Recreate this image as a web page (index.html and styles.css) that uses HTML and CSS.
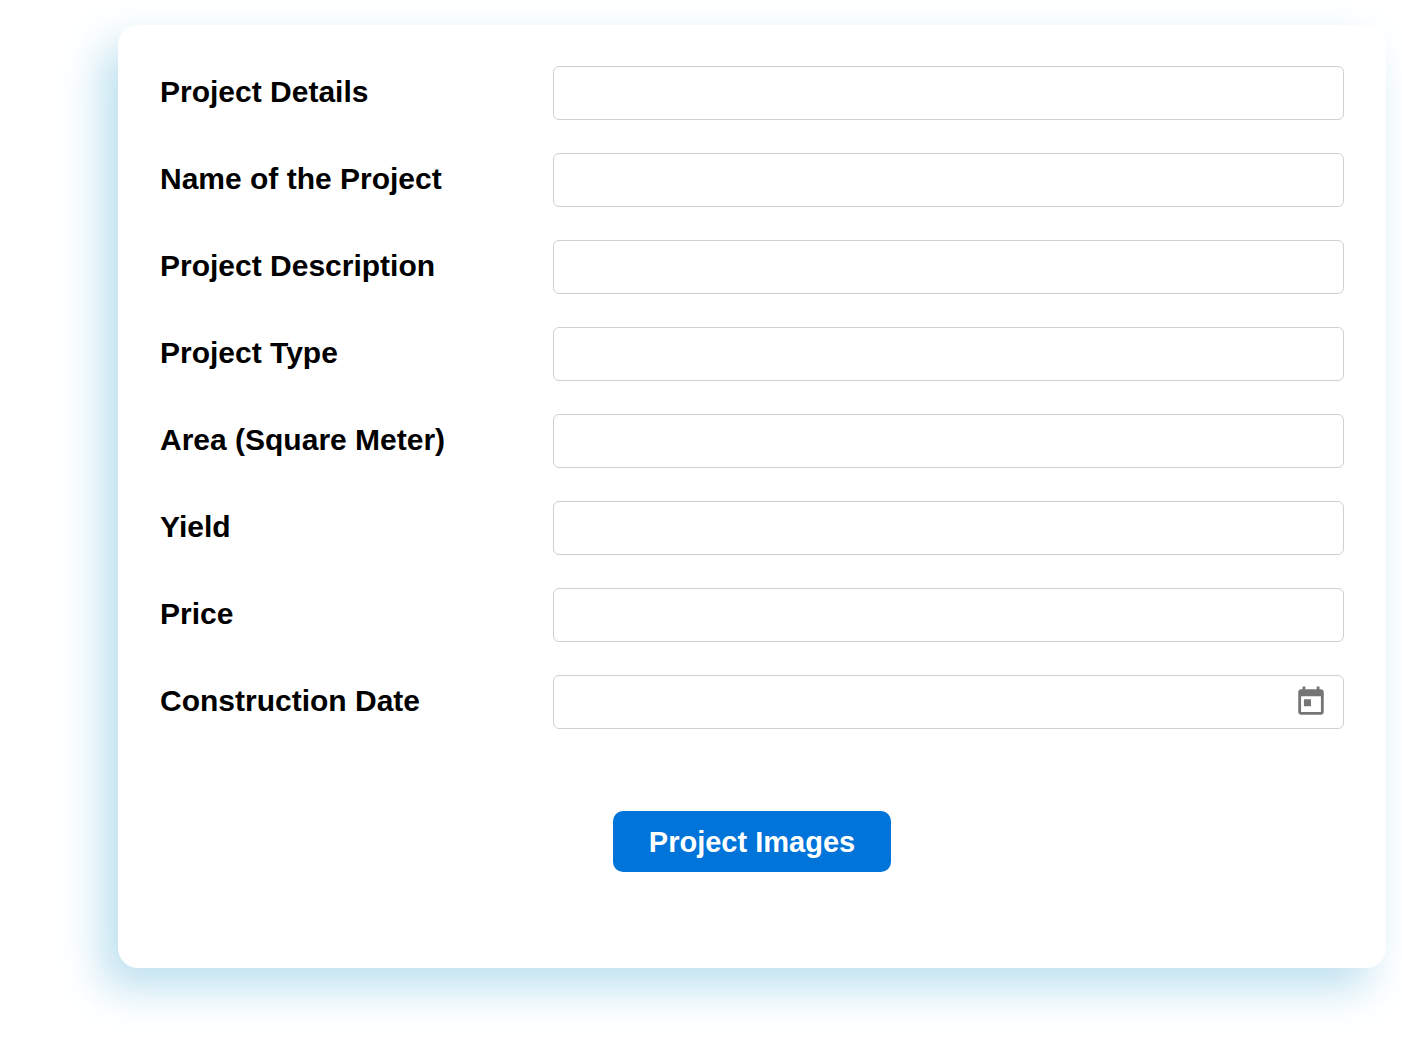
FILE: index.html
```html
<!DOCTYPE html>
<html lang="en">
<head>
<meta charset="utf-8">
<meta name="viewport" content="width=device-width, initial-scale=1">
<title>Project Details</title>
<link rel="stylesheet" href="styles.css">
</head>
<body>
<form class="card">
  <div class="row"><label for="details">Project Details</label><input class="field" id="details" type="text"></div>
  <div class="row"><label for="name">Name of the Project</label><input class="field" id="name" type="text"></div>
  <div class="row"><label for="description">Project Description</label><input class="field" id="description" type="text"></div>
  <div class="row"><label for="type">Project Type</label><input class="field" id="type" type="text"></div>
  <div class="row"><label for="area">Area (Square Meter)</label><input class="field" id="area" type="text"></div>
  <div class="row"><label for="yield">Yield</label><input class="field" id="yield" type="text"></div>
  <div class="row"><label for="price">Price</label><input class="field" id="price" type="text"></div>
  <div class="row"><label for="date">Construction Date</label>
    <div class="field date">
      <input class="date-input" id="date" type="text">
      <button class="date-button" type="button" aria-label="Choose date">
        <svg class="icon" viewBox="0 0 24 24" aria-hidden="true"><path d="M19 3h-1V1h-2v2H8V1H6v2H5c-1.110 0-1.990.9-1.990 2L3 19c0 1.100.89 2 2 2h14c1.100 0 2-.9 2-2V5c0-1.100-.9-2-2-2zm0 16H5V8h14v11zM7 10h5v5H7z"/></svg>
      </button>
    </div>
  </div>
  <button class="submit" type="button">Project Images</button>
</form>
</body>
</html>
```
FILE: styles.css
```css
* {
  box-sizing: border-box;
}

body {
  margin: 0;
  padding: 25px 16px 92px 118px;
  background: #fff;
  color: #000;
  font-family: "Liberation Sans", Arial, sans-serif;
  overflow-x: hidden;
}

.card {
  display: flex;
  flex-direction: column;
  gap: 33px;
  padding: 41px 42px 96px;
  border-radius: 20px;
  background: #fff;
  box-shadow: -16px 20px 44px #bce0ef;
}

.row {
  display: grid;
  grid-template-columns: 393px 1fr;
  align-items: center;
}

label {
  padding-bottom: 2px;
  font-size: 30px;
  font-weight: 700;
  line-height: 34px;
}

.field {
  width: 100%;
  height: 54px;
  padding: 0 15px;
  border: 1px solid #d0d0d0;
  border-radius: 6px;
  background: #fff;
  font: inherit;
  font-size: 28px;
}

.date {
  display: flex;
  align-items: center;
}

.date-input {
  flex: 1;
  min-width: 0;
  border: 0;
  outline: 0;
  font: inherit;
}

.date-button {
  display: flex;
  padding: 0;
  border: 0;
  background: none;
}

.icon {
  width: 34px;
  height: 34px;
  fill: #757575;
}

.submit {
  align-self: center;
  margin-top: 49px;
  padding: 14px 36px 13px;
  border: 0;
  border-radius: 10px;
  background: #0074d9;
  color: #fff;
  font: 700 29px/34px "Liberation Sans", Arial, sans-serif;
}
```
